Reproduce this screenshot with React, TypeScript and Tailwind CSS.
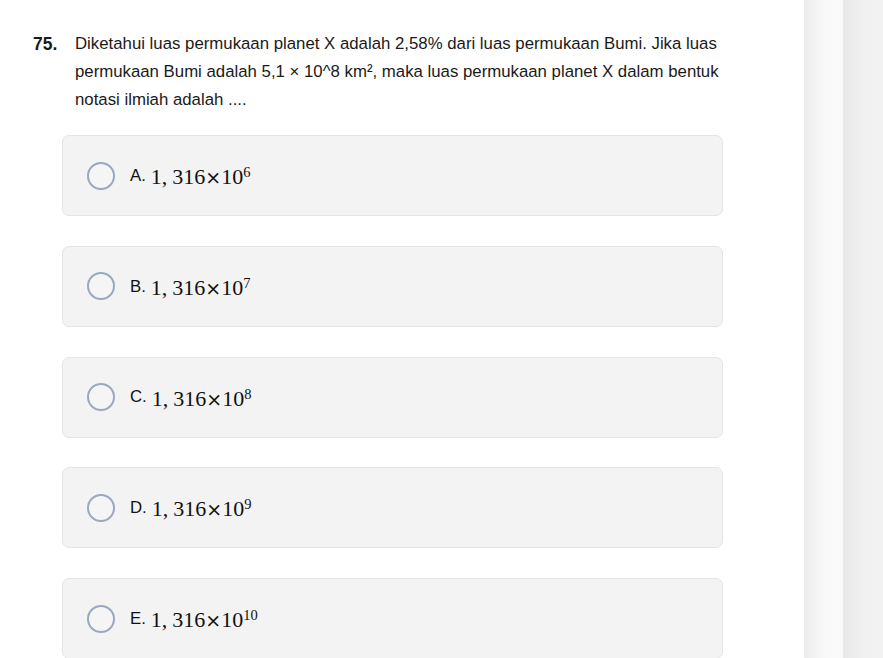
import React from 'react';

const options = [
  { label: 'A.', exp: '6' },
  { label: 'B.', exp: '7' },
  { label: 'C.', exp: '8' },
  { label: 'D.', exp: '9' },
  { label: 'E.', exp: '10' },
];

const Option: React.FC<{ label: string; exp: string }> = ({ label, exp }) => (
  <div className="h-[81px] w-[661px] rounded-[7px] border border-[#e4e4e4] bg-[#f3f3f3] flex items-center pl-[24px]">
    <span className="w-[28px] h-[28px] rounded-full border-[2.5px] border-[#9aa8bf] bg-[#f5f5f5] shrink-0" />
    <span className="ml-[15px] text-[16.8px] text-[#111] font-['Liberation_Sans',Arial,sans-serif]">{label}</span>
    <span className="ml-[5px] mt-[3px] text-[22px] text-[#111] font-['Liberation_Serif','Times_New_Roman',serif] leading-none">
      1,<span className="ml-[5px]">316</span>
      <span className="text-[19px] font-['DejaVu_Serif',serif]">×</span>10
      <sup className="text-[14.5px] -top-[7px]">{exp}</sup>
    </span>
  </div>
);

export default function App() {
  return (
    <div className="flex w-[883px] h-[658px] overflow-hidden bg-white">
      <main className="w-[804px] shrink-0 pt-[30px]">
        <div className="flex font-['Liberation_Sans',Arial,sans-serif] text-[16.8px] leading-[28px] text-[#1a1a1a]">
          <div className="w-[75px] pl-[33px] font-bold shrink-0 text-[17.5px]">75.</div>
          <p className="w-[660px]">
            Diketahui luas permukaan planet X adalah 2,58% dari luas permukaan Bumi. Jika luas permukaan Bumi adalah 5,1 × 10^8 km², maka luas permukaan planet X dalam bentuk notasi ilmiah adalah ....
          </p>
        </div>
        <div className="ml-[62px] mt-[21px] flex flex-col gap-[29.75px]">
          {options.map((o) => (
            <Option key={o.label} label={o.label} exp={o.exp} />
          ))}
        </div>
      </main>
      <div className="w-[39px] shrink-0 bg-gradient-to-r from-[#ececec] via-[#f8f8f8] to-[#fafafa]" />
      <div className="flex-1 bg-gradient-to-r from-[#e8e8e8] via-[#f1f1f1] to-[#f2f2f2]" />
    </div>
  );
}
